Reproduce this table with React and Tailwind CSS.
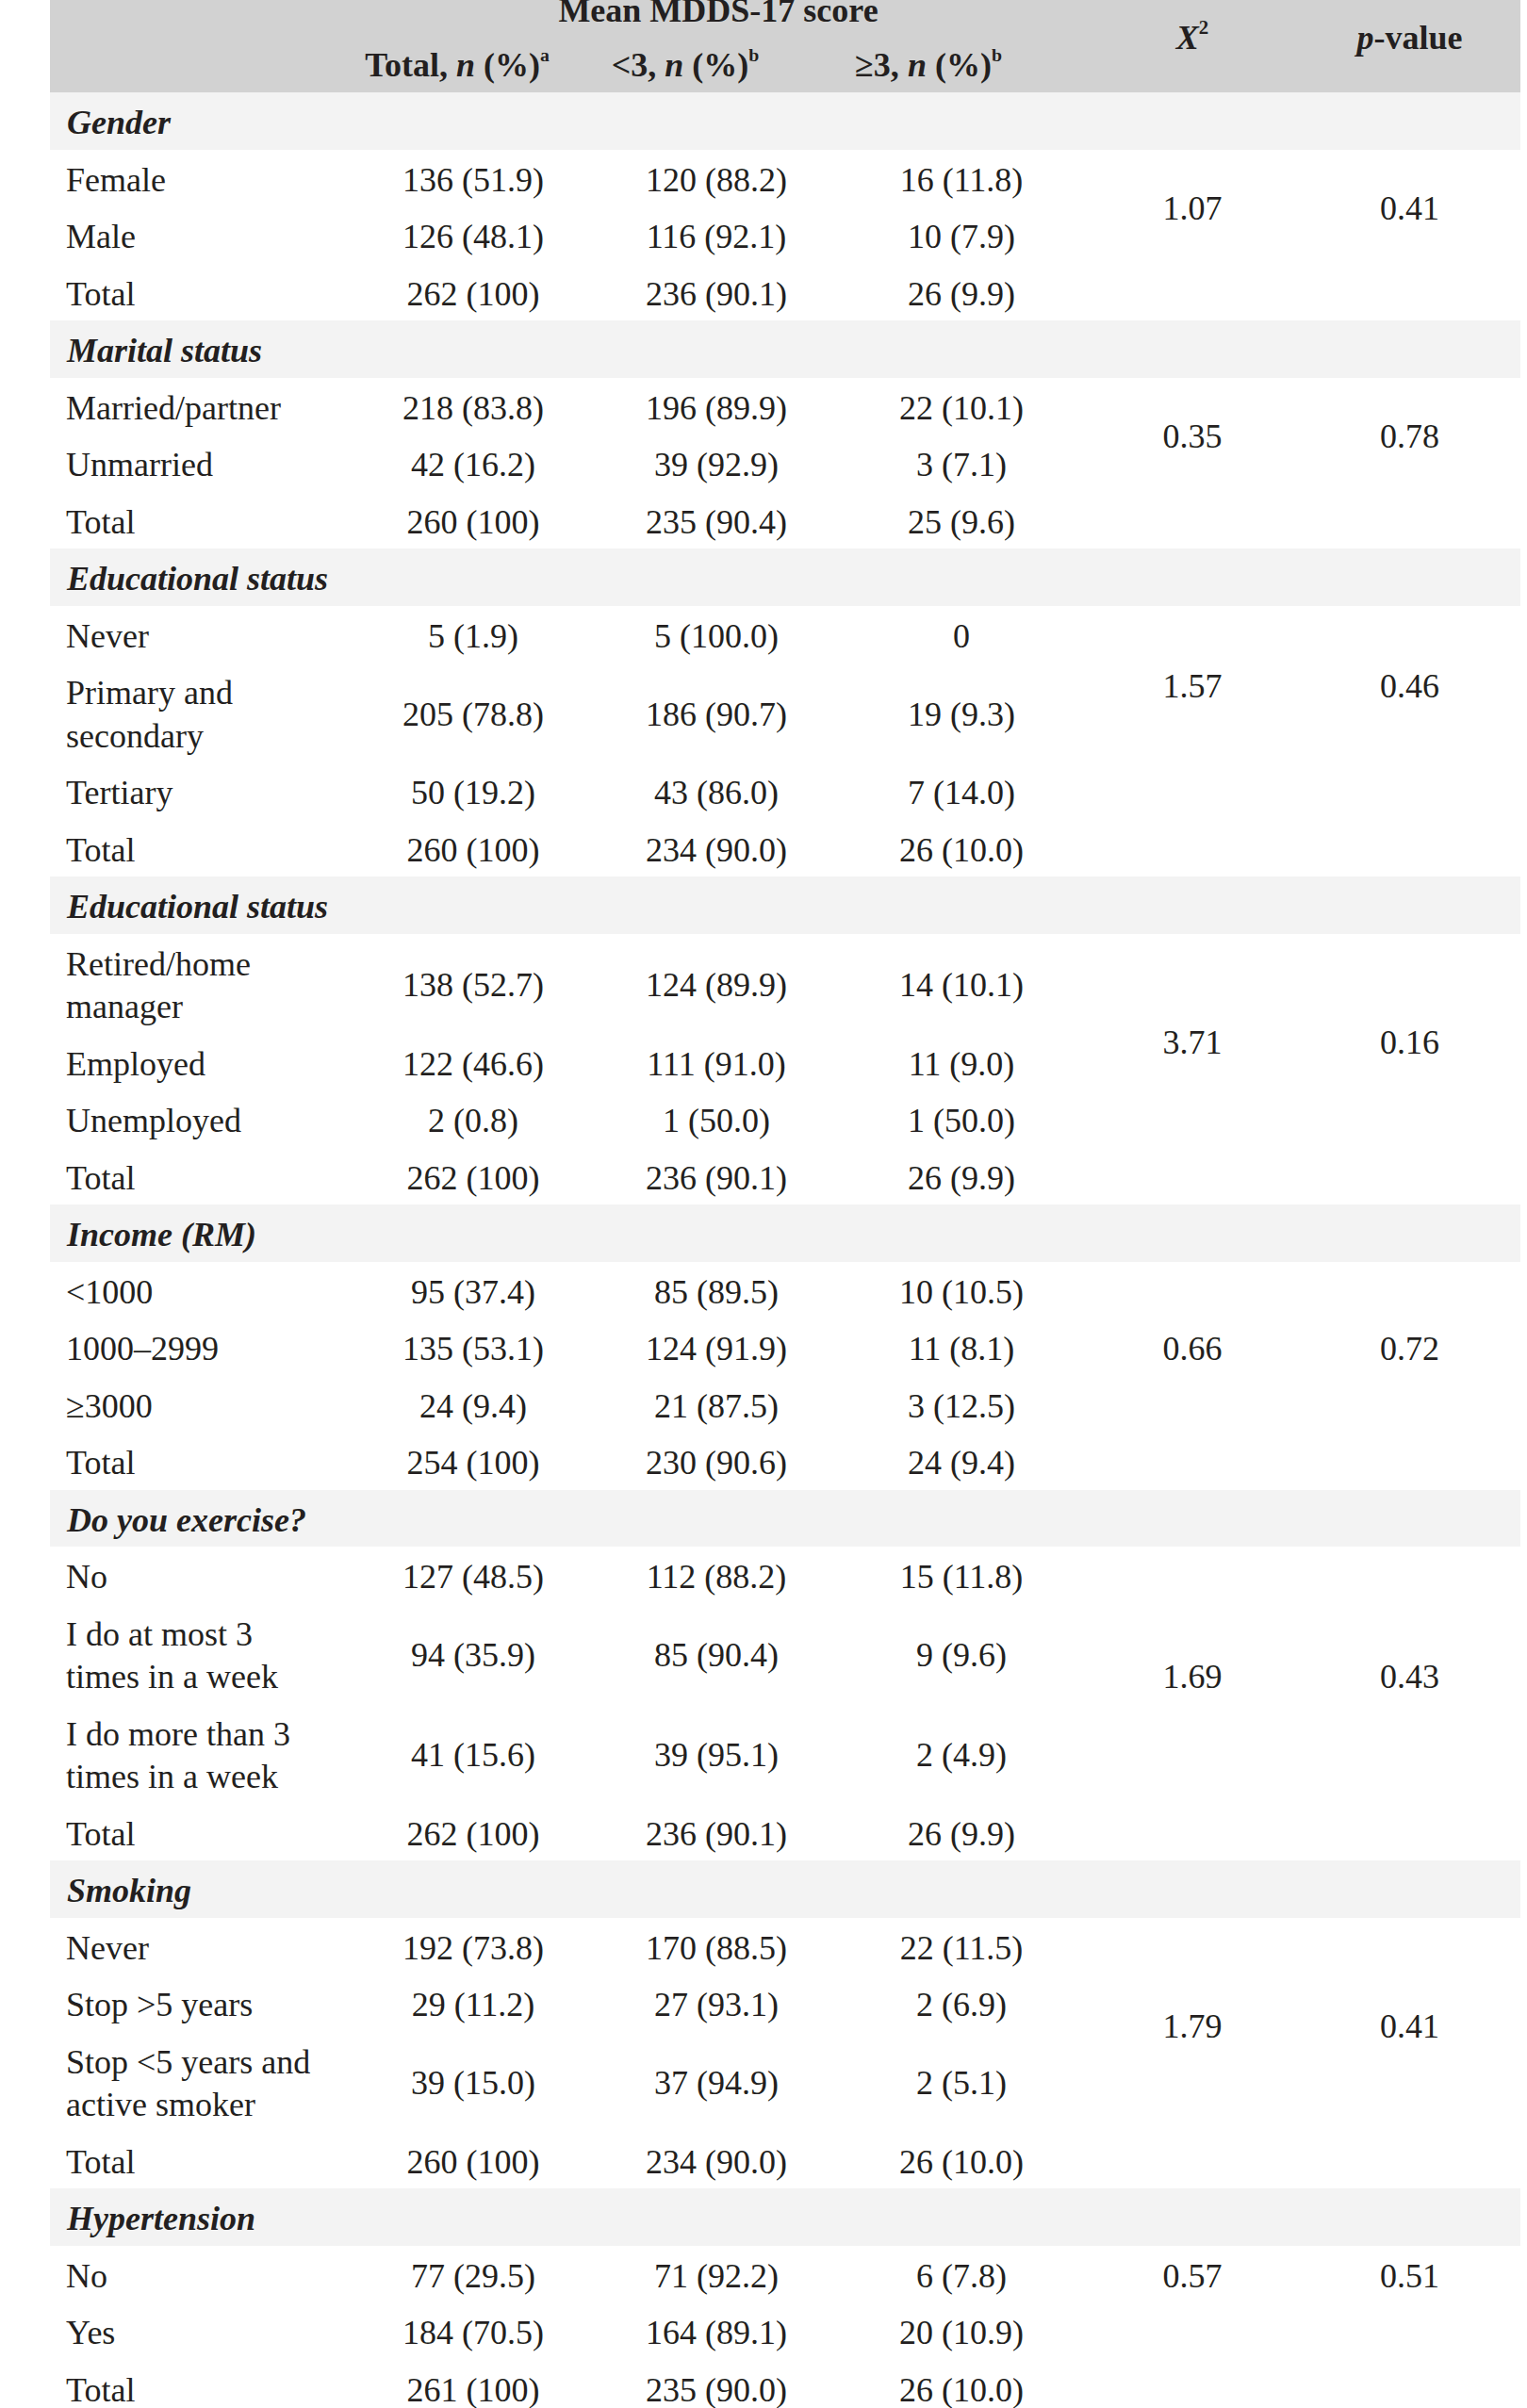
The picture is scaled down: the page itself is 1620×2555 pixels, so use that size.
import React from "react";

const sections = [
  {
    title: "Gender", span: 2, x2: "1.07", p: "0.41",
    rows: [
      ["Female", "136 (51.9)", "120 (88.2)", "16 (11.8)"],
      ["Male", "126 (48.1)", "116 (92.1)", "10 (7.9)"],
      ["Total", "262 (100)", "236 (90.1)", "26 (9.9)"],
    ],
  },
  {
    title: "Marital status", span: 2, x2: "0.35", p: "0.78",
    rows: [
      ["Married/partner", "218 (83.8)", "196 (89.9)", "22 (10.1)"],
      ["Unmarried", "42 (16.2)", "39 (92.9)", "3 (7.1)"],
      ["Total", "260 (100)", "235 (90.4)", "25 (9.6)"],
    ],
  },
  {
    title: "Educational status", span: 2, x2: "1.57", p: "0.46",
    rows: [
      ["Never", "5 (1.9)", "5 (100.0)", "0"],
      [["Primary and", "secondary"], "205 (78.8)", "186 (90.7)", "19 (9.3)"],
      ["Tertiary", "50 (19.2)", "43 (86.0)", "7 (14.0)"],
      ["Total", "260 (100)", "234 (90.0)", "26 (10.0)"],
    ],
  },
  {
    title: "Educational status", span: 3, x2: "3.71", p: "0.16",
    rows: [
      [["Retired/home", "manager"], "138 (52.7)", "124 (89.9)", "14 (10.1)"],
      ["Employed", "122 (46.6)", "111 (91.0)", "11 (9.0)"],
      ["Unemployed", "2 (0.8)", "1 (50.0)", "1 (50.0)"],
      ["Total", "262 (100)", "236 (90.1)", "26 (9.9)"],
    ],
  },
  {
    title: "Income (RM)", span: 3, x2: "0.66", p: "0.72",
    rows: [
      ["<1000", "95 (37.4)", "85 (89.5)", "10 (10.5)"],
      ["1000–2999", "135 (53.1)", "124 (91.9)", "11 (8.1)"],
      ["≥3000", "24 (9.4)", "21 (87.5)", "3 (12.5)"],
      ["Total", "254 (100)", "230 (90.6)", "24 (9.4)"],
    ],
  },
  {
    title: "Do you exercise?", span: 3, x2: "1.69", p: "0.43",
    rows: [
      ["No", "127 (48.5)", "112 (88.2)", "15 (11.8)"],
      [["I do at most 3", "times in a week"], "94 (35.9)", "85 (90.4)", "9 (9.6)"],
      [["I do more than 3", "times in a week"], "41 (15.6)", "39 (95.1)", "2 (4.9)"],
      ["Total", "262 (100)", "236 (90.1)", "26 (9.9)"],
    ],
  },
  {
    title: "Smoking", span: 3, x2: "1.79", p: "0.41",
    rows: [
      ["Never", "192 (73.8)", "170 (88.5)", "22 (11.5)"],
      ["Stop >5 years", "29 (11.2)", "27 (93.1)", "2 (6.9)"],
      [["Stop <5 years and", "active smoker"], "39 (15.0)", "37 (94.9)", "2 (5.1)"],
      ["Total", "260 (100)", "234 (90.0)", "26 (10.0)"],
    ],
  },
  {
    title: "Hypertension", span: 1, x2: "0.57", p: "0.51",
    rows: [
      ["No", "77 (29.5)", "71 (92.2)", "6 (7.8)"],
      ["Yes", "184 (70.5)", "164 (89.1)", "20 (10.9)"],
      ["Total", "261 (100)", "235 (90.0)", "26 (10.0)"],
    ],
  },
];

const cell = "p-0 pt-[10px] pb-[5px] leading-[45.5px] align-middle";

function Label({ value }) {
  if (Array.isArray(value)) {
    return (
      <span className="whitespace-nowrap">
        {value[0]}
        <br />
        {value[1]}
      </span>
    );
  }
  return <span className="whitespace-nowrap">{value}</span>;
}

function Section({ s }) {
  const out = [];
  out.push(
    <tr key="head" className="bg-[#f3f3f3]">
      <td colSpan={6} className={`${cell} pl-[18px] font-bold italic`}>
        {s.title}
      </td>
    </tr>
  );
  s.rows.forEach((r, i) => {
    out.push(
      <tr key={i}>
        <td className={`${cell} pl-[17px] text-left`}>
          <Label value={r[0]} />
        </td>
        <td className={`${cell} text-center`}>{r[1]}</td>
        <td className={`${cell} text-center`}>{r[2]}</td>
        <td className={`${cell} text-center`}>{r[3]}</td>
        {i === 0 && (
          <>
            <td rowSpan={s.span} className={`${cell} text-center`}>{s.x2}</td>
            <td rowSpan={s.span} className={`${cell} text-center`}>{s.p}</td>
          </>
        )}
        {i >= s.span && (
          <>
            <td className={cell}></td>
            <td className={cell}></td>
          </>
        )}
      </tr>
    );
  });
  return out;
}

export default function App() {
  return (
    <div className="w-[1620px] min-h-[2555px] bg-white overflow-hidden">
      <div className="pl-[53px]">
        <table className="table-fixed border-collapse w-[1560px] font-['Liberation_Serif',serif] text-[36px] text-[#231f20]">
          <colgroup>
            <col className="w-[319px]" />
            <col className="w-[260px]" />
            <col className="w-[256px]" />
            <col className="w-[264px]" />
            <col className="w-[226px]" />
            <col className="w-[235px]" />
          </colgroup>
          <thead className="bg-[#d2d2d2] font-bold">
            <tr>
              <th rowSpan={2} className="p-0"></th>
              <th colSpan={3} className="p-0 h-[22px] leading-[22px] text-center font-bold whitespace-nowrap">
                Mean MDDS-17 score
              </th>
              <th rowSpan={2} className="p-0 pt-[24px] leading-[32px] align-top text-center font-bold">
                <span className="italic">X</span>
                <sup className="text-[58%] top-[-0.75em]">2</sup>
              </th>
              <th rowSpan={2} className="p-0 pt-[24px] leading-[32px] align-top text-center font-bold">
                <span className="italic">p</span>-value
              </th>
            </tr>
            <tr>
              <th className="p-0 pt-[31px] pb-[13px] leading-[32px] text-center font-bold whitespace-nowrap pr-[34px]">
                Total, <span className="italic">n</span> (%)<sup className="text-[55%] top-[-0.8em]">a</sup>
              </th>
              <th className="p-0 pt-[31px] pb-[13px] leading-[32px] text-center font-bold whitespace-nowrap pr-[66px]">
                &lt;3, <span className="italic">n</span> (%)<sup className="text-[55%] top-[-0.8em]">b</sup>
              </th>
              <th className="p-0 pt-[31px] pb-[13px] leading-[32px] text-center font-bold whitespace-nowrap pr-[70px]">
                ≥3, <span className="italic">n</span> (%)<sup className="text-[55%] top-[-0.8em]">b</sup>
              </th>
            </tr>
          </thead>
          <tbody>
            {sections.map((s, i) => (
              <Section key={i} s={s} />
            ))}
          </tbody>
        </table>
      </div>
    </div>
  );
}
